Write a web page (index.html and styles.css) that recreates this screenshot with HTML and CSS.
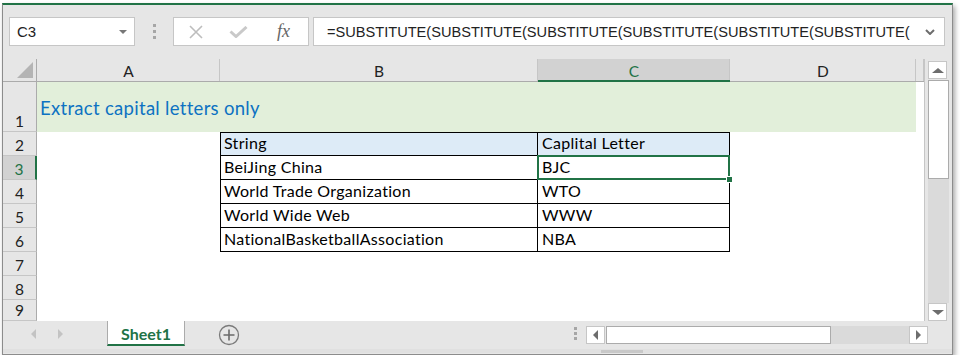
FILE: index.html
```html
<!DOCTYPE html>
<html lang="en">
<head>
    <meta charset="UTF-8">
    <title>Extract capital letters only</title>
    <link rel="stylesheet" href="styles.css">
</head>
<body>
    <div class="window">
        <div class="toolbar">
            <div class="namebox"><span>C3</span><span class="caret"></span></div>
            <div class="grip"><i></i><i></i><i></i></div>
            <div class="fxbuttons">
                <svg width="16" height="14" viewBox="0 0 16 14"><path d="M2 1 L14 13 M14 1 L2 13" stroke="#bdbdbd" stroke-width="1.6" fill="none"/></svg>
                <svg width="19" height="12" viewBox="0 0 19 12"><path d="M1.5 5.5 L7 10.5 L17.5 1" stroke="#c9c9c9" stroke-width="3" fill="none"/></svg>
                <span class="fx">fx</span>
            </div>
            <div class="formula">
                <span class="ftext">=SUBSTITUTE(SUBSTITUTE(SUBSTITUTE(SUBSTITUTE(SUBSTITUTE(SUBSTITUTE(</span>
                <svg width="10" height="6" viewBox="0 0 10 6"><path d="M1 1 L5 5 L9 1" stroke="#6d6d6d" stroke-width="2" fill="none"/></svg>
            </div>
        </div>

        <div class="main">
            <div class="sheet">
                <!-- column headers -->
                <div class="corner"></div>
                <div class="colhead">A</div>
                <div class="colhead">B</div>
                <div class="colhead active">C</div>
                <div class="colhead">D</div>
                <div class="colhead"></div>

                <!-- row 1 -->
                <div class="rowhead">1</div>
                <div class="title">Extract capital letters only</div>
                <div class="cell"></div>

                <!-- row 2 -->
                <div class="rowhead">2</div>
                <div class="cell"></div>
                <div class="cell tb first top head">String</div>
                <div class="cell tb top head">Caplital Letter</div>
                <div class="cell"></div>
                <div class="cell"></div>

                <!-- row 3 -->
                <div class="rowhead active">3</div>
                <div class="cell"></div>
                <div class="cell tb first">BeiJing China</div>
                <div class="cell tb selected">BJC</div>
                <div class="cell"></div>
                <div class="cell"></div>

                <!-- row 4 -->
                <div class="rowhead">4</div>
                <div class="cell"></div>
                <div class="cell tb first">World Trade Organization</div>
                <div class="cell tb">WTO</div>
                <div class="cell"></div>
                <div class="cell"></div>

                <!-- row 5 -->
                <div class="rowhead">5</div>
                <div class="cell"></div>
                <div class="cell tb first">World Wide Web</div>
                <div class="cell tb">WWW</div>
                <div class="cell"></div>
                <div class="cell"></div>

                <!-- row 6 -->
                <div class="rowhead">6</div>
                <div class="cell"></div>
                <div class="cell tb first">NationalBasketballAssociation</div>
                <div class="cell tb">NBA</div>
                <div class="cell"></div>
                <div class="cell"></div>

                <div class="rowhead">7</div>
                <div class="cell blank"></div>
                <div class="rowhead">8</div>
                <div class="cell blank"></div>
                <div class="rowhead">9</div>
                <div class="cell blank"></div>
            </div>

            <div class="vscroll">
                <div class="sbtn"><span class="tri up"></span></div>
                <div class="vthumb"></div>
                <div class="vtrack"></div>
                <div class="sbtn"><span class="tri down"></span></div>
            </div>
        </div>

        <div class="tabs">
            <div class="tabnav"><span class="tri left light"></span><span class="tri right light"></span></div>
            <div class="tab">Sheet1</div>
            <div class="addsheet">
                <svg width="22" height="22" viewBox="0 0 22 22"><circle cx="11" cy="11" r="9.5" stroke="#7a7a7a" stroke-width="1.3" fill="none"/><path d="M11 5.5 V16.5 M5.5 11 H16.5" stroke="#6a6a6a" stroke-width="1.6"/></svg>
            </div>
            <div class="spacer"></div>
            <div class="grip hgrip"><i></i><i></i><i></i></div>
            <div class="hscroll">
                <div class="sbtn"><span class="tri left"></span></div>
                <div class="hthumb"></div>
                <div class="htrack"></div>
                <div class="sbtn"><span class="tri right"></span></div>
            </div>
        </div>

        <div class="status"><span class="sbar"></span></div>
    </div>
</body>
</html>
```

FILE: styles.css
```css
body {
    margin: 0;
    background: #fff;
    font-family: Lato, "Liberation Sans", sans-serif;
    color: #000;
}
.window {
    margin: 3px 0 0 2px;
    width: 951px;
    height: 352px;
    box-sizing: border-box;
    border: 1px solid #8c8c8c;
    border-top: 2px solid #217346;
    background: #e6e6e6;
    box-shadow: 2px 3px 5px rgba(0, 0, 0, 0.35);
    display: flex;
    flex-direction: column;
    overflow: hidden;
}

/* formula bar */
.toolbar {
    height: 54px;
    box-sizing: border-box;
    padding: 12px 7px 0 6px;
    display: flex;
    align-items: flex-start;
}
.namebox {
    width: 126px;
    height: 29px;
    box-sizing: border-box;
    border: 1px solid #c6c6c6;
    background: #fff;
    display: flex;
    align-items: center;
    justify-content: space-between;
    padding: 0 7px 0 7px;
    font-family: "Liberation Sans", sans-serif;
    font-size: 15px;
    color: #222;
}
.caret {
    width: 0;
    height: 0;
    border-left: 4px solid transparent;
    border-right: 4px solid transparent;
    border-top: 4px solid #777;
}
.grip {
    width: 38px;
    height: 29px;
    display: flex;
    flex-direction: column;
    align-items: center;
    justify-content: center;
    gap: 3px;
}
.grip i {
    display: block;
    width: 3px;
    height: 3px;
    background: #a6a6a6;
}
.fxbuttons {
    width: 136px;
    height: 29px;
    box-sizing: border-box;
    border: 1px solid #c6c6c6;
    background: #fff;
    display: flex;
    align-items: center;
    padding-left: 14px;
    gap: 25px;
}
.fx {
    font-family: "Liberation Serif", serif;
    font-style: italic;
    font-size: 18px;
    color: #666;
    margin-left: 4px;
}
.formula {
    flex: 1;
    margin-left: 4px;
    height: 29px;
    box-sizing: border-box;
    border: 1px solid #c6c6c6;
    background: #fff;
    display: flex;
    align-items: center;
    padding: 0 9px 0 13px;
    justify-content: space-between;
}
.ftext {
    font-family: "Liberation Sans", sans-serif;
    font-size: 14.6px;
    color: #222;
    white-space: nowrap;
    overflow: hidden;
}

/* sheet grid */
.main {
    display: flex;
    height: 262px;
}
.sheet {
    width: 922px;
    box-sizing: border-box;
    border-right: 1px solid #c6c6c6;
    background: #fff;
    display: grid;
    grid-template-columns: 34px 183px 318px 192px 186px 8px;
    grid-template-rows: 23px 50px repeat(7, 24px) 21px;
    overflow: hidden;
}
.corner {
    background: #e6e6e6;
    border-right: 1px solid #ababab;
    border-bottom: 1px solid #ababab;
    position: relative;
}
.corner::after {
    content: "";
    position: absolute;
    right: 3px;
    bottom: 3px;
    border-left: 16px solid transparent;
    border-bottom: 16px solid #b4b4b4;
}
.colhead {
    background: #e6e6e6;
    border-bottom: 1px solid #ababab;
    box-shadow: inset -1px 0 0 #c6c6c6;
    display: flex;
    align-items: center;
    justify-content: center;
    font-size: 15.5px;
    color: #222;
    padding-top: 2px;
}
.colhead.active {
    background: #d2d2d2;
    color: #217346;
    border-bottom: 2px solid #217346;
}
.rowhead {
    background: #e6e6e6;
    border-right: 1px solid #ababab;
    border-bottom: 1px solid #c6c6c6;
    display: flex;
    align-items: flex-end;
    justify-content: center;
    font-size: 15.5px;
    color: #222;
    padding-bottom: 1px;
}
.rowhead.active {
    background: #d2d2d2;
    color: #217346;
    border-right: 2px solid #217346;
}
.title {
    grid-column: 2 / 6;
    background: #e2efda;
    color: #0d72c2;
    font-size: 18.5px;
    letter-spacing: 0.3px;
    display: flex;
    align-items: center;
    padding: 2px 0 0 3px;
}
.cell {
    background: #fff;
    font-size: 16px;
    letter-spacing: 0.3px;
    display: flex;
    align-items: flex-end;
    padding: 0 0 3px 4px;
}
.cell.blank {
    grid-column: 2 / 7;
}
.tb {
    border-right: 1px solid #000;
    border-bottom: 1px solid #000;
}
.tb.first {
    border-left: 1px solid #000;
    padding-left: 3px;
}
.tb.top {
    border-top: 1px solid #000;
}
.tb.head {
    background: #ddebf7;
}
.selected {
    position: relative;
}
.selected::after {
    content: "";
    position: absolute;
    left: -1px;
    top: -1px;
    right: -1px;
    bottom: -1px;
    border: 2px solid #217346;
}
.selected::before {
    content: "";
    position: absolute;
    right: -4px;
    bottom: -4px;
    width: 5px;
    height: 5px;
    background: #217346;
    border: 1px solid #fff;
    z-index: 1;
}

/* scrollbars */
.vscroll {
    flex: 1;
    padding: 2px 3px 0 3px;
    display: flex;
    flex-direction: column;
}
.sbtn {
    width: 19px;
    height: 18px;
    box-sizing: border-box;
    border: 1px solid #c6c6c6;
    background: #fff;
    display: flex;
    align-items: center;
    justify-content: center;
}
.vthumb {
    height: 99px;
    margin-top: 1px;
    box-sizing: border-box;
    border: 1px solid #ababab;
    background: #fff;
}
.vtrack {
    flex: 1;
    background: #dadada;
}
.tri {
    width: 0;
    height: 0;
}
.tri.up {
    border-left: 6px solid transparent;
    border-right: 6px solid transparent;
    border-bottom: 5px solid #6d6d6d;
}
.tri.down {
    border-left: 6px solid transparent;
    border-right: 6px solid transparent;
    border-top: 5px solid #6d6d6d;
}
.tri.left {
    border-top: 5px solid transparent;
    border-bottom: 5px solid transparent;
    border-right: 5px solid #6d6d6d;
}
.tri.right {
    border-top: 5px solid transparent;
    border-bottom: 5px solid transparent;
    border-left: 5px solid #6d6d6d;
}
.tri.light.left {
    border-right-color: #c3c3c3;
}
.tri.light.right {
    border-left-color: #c3c3c3;
}

/* sheet tabs */
.tabs {
    height: 25px;
    display: flex;
    align-items: stretch;
}
.tabnav {
    width: 104px;
    display: flex;
    align-items: center;
    padding-left: 28px;
    box-sizing: border-box;
    gap: 22px;
}
.tab {
    width: 78px;
    box-sizing: border-box;
    background: #fff;
    border-left: 1px solid #ababab;
    border-right: 1px solid #ababab;
    border-bottom: 2px solid #217346;
    color: #217346;
    font-weight: bold;
    font-size: 16px;
    display: flex;
    align-items: center;
    justify-content: center;
    padding-top: 1px;
}
.addsheet {
    width: 88px;
    display: flex;
    align-items: center;
    justify-content: center;
    padding-top: 3px;
}
.spacer {
    flex: 1;
}
.hgrip {
    width: 12px;
    height: 25px;
    gap: 2px;
    margin-right: 5px;
}
.hscroll {
    display: flex;
    align-items: center;
    margin-right: 24px;
    padding-top: 2px;
}
.hthumb {
    width: 225px;
    height: 18px;
    box-sizing: border-box;
    border: 1px solid #ababab;
    background: #fff;
    margin-left: 1px;
}
.htrack {
    width: 78px;
    height: 18px;
    background: #dadada;
}
.status {
    height: 8px;
    box-sizing: border-box;
    border-top: 3px solid #e6e6e6;
    border-bottom: 1px solid #e6e6e6;
    background: #e0e0e0;
    display: flex;
}
.sbar {
    margin-left: 598px;
    margin-top: 1px;
    width: 42px;
    height: 3px;
    background: #c8c8c8;
}
```
